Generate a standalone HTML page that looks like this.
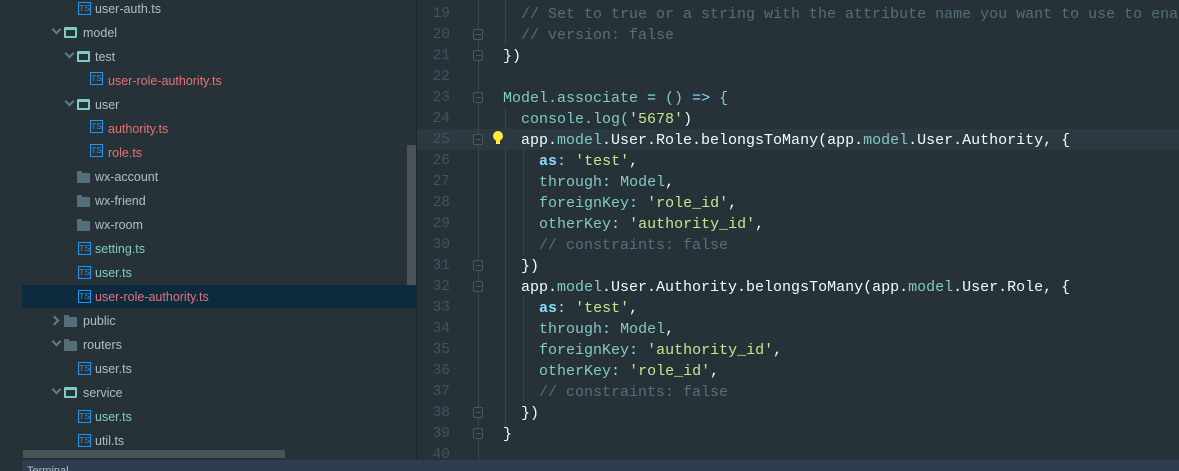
<!DOCTYPE html>
<html><head><meta charset="utf-8"><style>
*{margin:0;padding:0;box-sizing:border-box}
body{width:1179px;height:471px;overflow:hidden;background:#263238;position:relative;font-family:"Liberation Sans",sans-serif}
.t{position:absolute;font-size:12.5px;color:#b0bec5;white-space:nowrap;line-height:16px}
.r{color:#e57373}.g{color:#80cbc4}
.ts{position:absolute;width:13px;height:13px;border:1px solid #2196f3;color:#2196f3;font-size:8.5px;line-height:11px;text-align:center;font-family:"Liberation Sans",sans-serif}
.fo{position:absolute;width:13px;height:11px;border:2px solid #80cbc4;border-top-width:3px;border-radius:1px}
.fc{position:absolute;width:13px;height:10px;background:#546e7a;border-radius:1px}
.fc:before{content:"";position:absolute;left:0;top:-2px;width:5px;height:3px;background:#546e7a}
.ch{position:absolute;width:7px;height:7px;border-right:2px solid #607d8b;border-bottom:2px solid #607d8b;transform:rotate(45deg)}
.chr{transform:rotate(-45deg)}
.ln{position:absolute;left:416px;width:34px;text-align:right;font-family:"Liberation Mono",monospace;font-size:14.5px;color:#3e5460;line-height:21px}
.c{position:absolute;left:503px;font-family:"Liberation Mono",monospace;font-size:15px;color:#eeffff;white-space:pre;line-height:21px}
.cm{color:#546e7a}.s{color:#c3e88d}.k{color:#80cbc4}.b{color:#89ddff;font-weight:bold}.p{color:#89ddff}
.fold{position:absolute;left:473px;width:10px;height:11px;border:1px solid #455a64;border-radius:2px;background:#263238}
.fold:after{content:"";position:absolute;left:2px;top:4px;width:5px;height:1px;background:#455a64}
</style></head><body>
<div style="position:absolute;left:22px;top:285px;width:394px;height:23px;background:#0d2a3f"></div>
<div class="ts" style="left:78px;top:2px">TS</div><div class="t" style="left:95px;top:1px">user-auth.ts</div>
<div class="ch" style="left:53px;top:26px"></div><div class="fo" style="left:64px;top:27px"></div><div class="t" style="left:83px;top:25px">model</div>
<div class="ch" style="left:66px;top:50px"></div><div class="fo" style="left:77px;top:51px"></div><div class="t" style="left:95px;top:49px">test</div>
<div class="ts" style="left:90px;top:72px">TS</div><div class="t r" style="left:108px;top:73px">user-role-authority.ts</div>
<div class="ch" style="left:66px;top:98px"></div><div class="fo" style="left:77px;top:99px"></div><div class="t" style="left:95px;top:97px">user</div>
<div class="ts" style="left:90px;top:120px">TS</div><div class="t r" style="left:108px;top:121px">authority.ts</div>
<div class="ts" style="left:90px;top:144px">TS</div><div class="t r" style="left:108px;top:145px">role.ts</div>
<div class="fc" style="left:77px;top:173px"></div><div class="t" style="left:95px;top:169px">wx-account</div>
<div class="fc" style="left:77px;top:197px"></div><div class="t" style="left:95px;top:193px">wx-friend</div>
<div class="fc" style="left:77px;top:221px"></div><div class="t" style="left:95px;top:217px">wx-room</div>
<div class="ts" style="left:78px;top:242px">TS</div><div class="t g" style="left:95px;top:241px">setting.ts</div>
<div class="ts" style="left:78px;top:266px">TS</div><div class="t g" style="left:95px;top:265px">user.ts</div>
<div class="ts" style="left:78px;top:290px">TS</div><div class="t r" style="left:95px;top:289px">user-role-authority.ts</div>
<div class="ch chr" style="left:51px;top:317px"></div><div class="fc" style="left:64px;top:317px"></div><div class="t" style="left:83px;top:313px">public</div>
<div class="ch" style="left:53px;top:338px"></div><div class="fc" style="left:64px;top:341px"></div><div class="t" style="left:83px;top:337px">routers</div>
<div class="ts" style="left:78px;top:362px">TS</div><div class="t" style="left:95px;top:361px">user.ts</div>
<div class="ch" style="left:53px;top:386px"></div><div class="fo" style="left:64px;top:387px"></div><div class="t" style="left:83px;top:385px">service</div>
<div class="ts" style="left:78px;top:410px">TS</div><div class="t g" style="left:95px;top:409px">user.ts</div>
<div class="ts" style="left:78px;top:434px">TS</div><div class="t" style="left:95px;top:433px">util.ts</div>
<div style="position:absolute;left:407px;top:145px;width:9px;height:140px;background:#4a5357"></div>
<div style="position:absolute;left:23px;top:450px;width:262px;height:8px;background:#4a5357"></div>
<div style="position:absolute;left:416px;top:0;width:1px;height:460px;background:#1e272c"></div>
<div style="position:absolute;left:22px;top:460px;width:1157px;height:11px;background:#2e3d50;overflow:hidden"><span style="position:absolute;left:5px;top:5px;font-size:11px;color:#b0bec5">Terminal</span></div>
<div style="position:absolute;left:417px;top:129px;width:762px;height:21px;background:#2c3940"></div>
<div style="position:absolute;left:478px;top:0;width:1px;height:460px;background:#37474f"></div>
<div style="position:absolute;left:505px;top:0;width:1px;height:45px;background:#37474f"></div>
<div style="position:absolute;left:523px;top:150px;width:1px;height:105px;background:#37474f"></div>
<div style="position:absolute;left:505px;top:108px;width:1px;height:21px;background:#37474f"></div>
<div style="position:absolute;left:505px;top:150px;width:1px;height:278px;background:#37474f"></div>
<div style="position:absolute;left:523px;top:297px;width:1px;height:105px;background:#37474f"></div>
<div class="fold" style="left:473px;top:29px"></div><div class="fold" style="left:473px;top:50px"></div>
<div class="fold" style="left:473px;top:92px"></div><div class="fold" style="left:473px;top:134px"></div>
<div class="fold" style="left:473px;top:260px"></div><div class="fold" style="left:473px;top:281px"></div>
<div class="fold" style="left:473px;top:407px"></div><div class="fold" style="left:473px;top:428px"></div>
<div style="position:absolute;left:493px;top:131px;width:10px;height:10px;border-radius:50%;background:#ffeb3b"></div>
<div style="position:absolute;left:496px;top:140px;width:4px;height:4px;background:#ffeb3b"></div>
<div class="ln" style="top:4px">19<br>20<br>21<br>22<br>23<br>24<br>25<br>26<br>27<br>28<br>29<br>30<br>31<br>32<br>33<br>34<br>35<br>36<br>37<br>38<br>39<br>40</div>
<div class="c" style="top:4px"><span class="cm">  // Set to true or a string with the attribute name you want to use to enable</span>
<span class="cm">  // version: false</span>
})

<span class="k">Model.associate <span class="p">=</span> () <span class="p">=&gt;</span> {</span>
  <span class="k">console.log(</span><span class="s">'5678'</span>)
  app.<span class="k">model</span>.User.Role.belongsToMany(app.<span class="k">model</span>.User.Authority, {
    <span class="b">as</span><span class="p">:</span> <span class="s">'test'</span>,
    <span class="k">through</span><span class="p">:</span> <span class="k">Model</span>,
    <span class="k">foreignKey</span><span class="p">:</span> <span class="s">'role_id'</span>,
    <span class="k">otherKey</span><span class="p">:</span> <span class="s">'authority_id'</span>,
    <span class="cm">// constraints: false</span>
  })
  app.<span class="k">model</span>.User.Authority.belongsToMany(app.<span class="k">model</span>.User.Role, {
    <span class="b">as</span><span class="p">:</span> <span class="s">'test'</span>,
    <span class="k">through</span><span class="p">:</span> <span class="k">Model</span>,
    <span class="k">foreignKey</span><span class="p">:</span> <span class="s">'authority_id'</span>,
    <span class="k">otherKey</span><span class="p">:</span> <span class="s">'role_id'</span>,
    <span class="cm">// constraints: false</span>
  })
}
</div>
</body></html>
